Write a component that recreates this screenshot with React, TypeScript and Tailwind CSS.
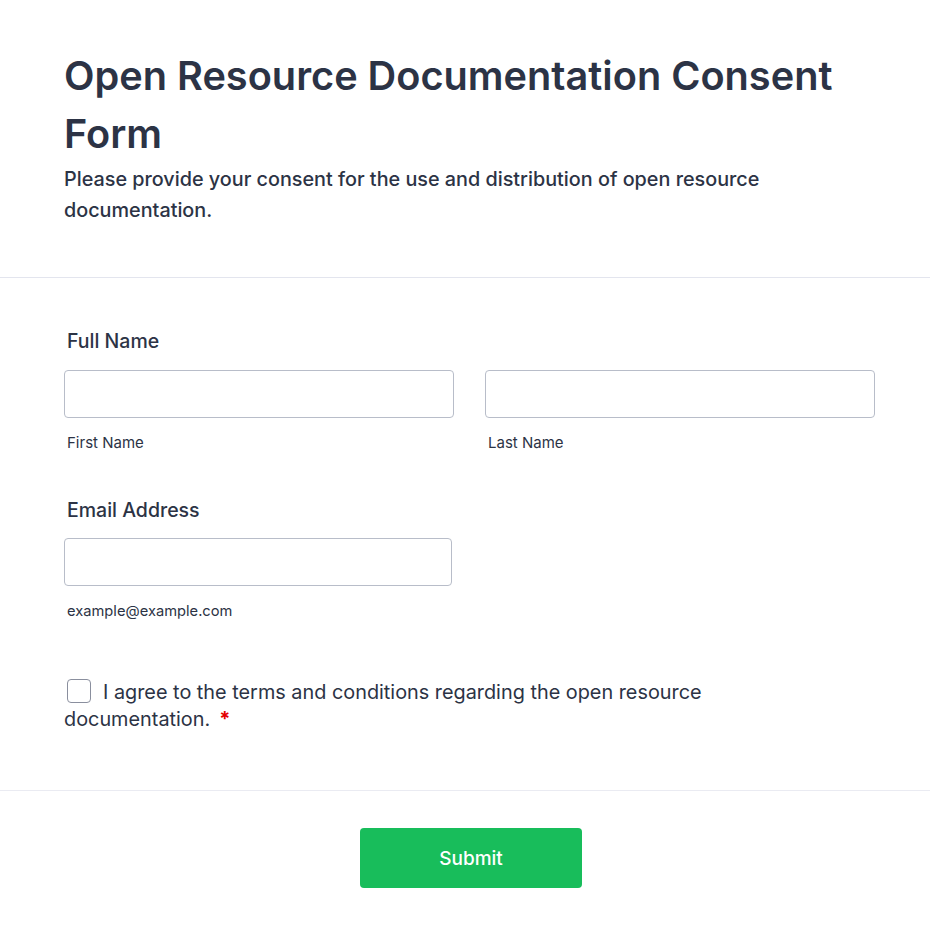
import React from "react";

export default function App() {
  return (
    <div className="min-h-[937px] w-full bg-white text-[#2c3345]" style={{ fontFamily: "Inter, 'Noto Sans', sans-serif" }}>
      <div className="px-16 pt-[47px] pb-[51px] border-b border-[#e3e5ee]">
        <h1 className="text-[39.7px] font-semibold leading-[58px] text-[#2c3345] max-w-[800px]">
          Open Resource Documentation Consent Form
        </h1>
        <p className="text-[19.8px] font-medium leading-[31px] mt-[1px] max-w-[740px]">
          Please provide your consent for the use and distribution of open resource documentation.
        </p>
      </div>

      <div className="pl-16 pt-[50px] w-[875px]">
        <div className="text-[19.5px] font-medium pl-[3px] leading-[26px]">Full Name</div>
        <div className="grid grid-cols-2 gap-[31px] mt-[16px]">
          <div>
            <div className="h-12 rounded border border-[#b8bdc9]"></div>
            <div className="text-[15px] mt-[15px] pl-[3px] leading-[20px]">First Name</div>
          </div>
          <div>
            <div className="h-12 rounded border border-[#b8bdc9]"></div>
            <div className="text-[15px] mt-[15px] pl-[3px] leading-[20px]">Last Name</div>
          </div>
        </div>

        <div className="text-[19.5px] font-medium pl-[3px] leading-[26px] mt-[44px]">Email Address</div>
        <div className="w-[388px] mt-[15px]">
          <div className="h-12 rounded border border-[#b8bdc9]"></div>
          <div className="text-[14.7px] mt-[15px] pl-[3px] leading-[20px]">example@example.com</div>
        </div>

        <div className="mt-[58px] text-[19.85px] leading-[27px] max-w-[680px]">
          <span className="inline-block w-6 h-6 align-[-4px] ml-[3px] mr-[12px] rounded border border-[#8a8f9e]"></span>
          I agree to the terms and conditions regarding the open resource documentation.
          <span className="text-[#e40000] font-bold ml-[9px]">*</span>
        </div>
      </div>

      <div className="mt-[57px] border-t border-[#eaebf2] flex justify-center pl-[12px] pt-[37px]">
        <button className="w-[222px] h-[60px] pt-[3px] rounded bg-[#18bd5b] text-white text-[19px] font-medium">
          Submit
        </button>
      </div>
    </div>
  );
}
